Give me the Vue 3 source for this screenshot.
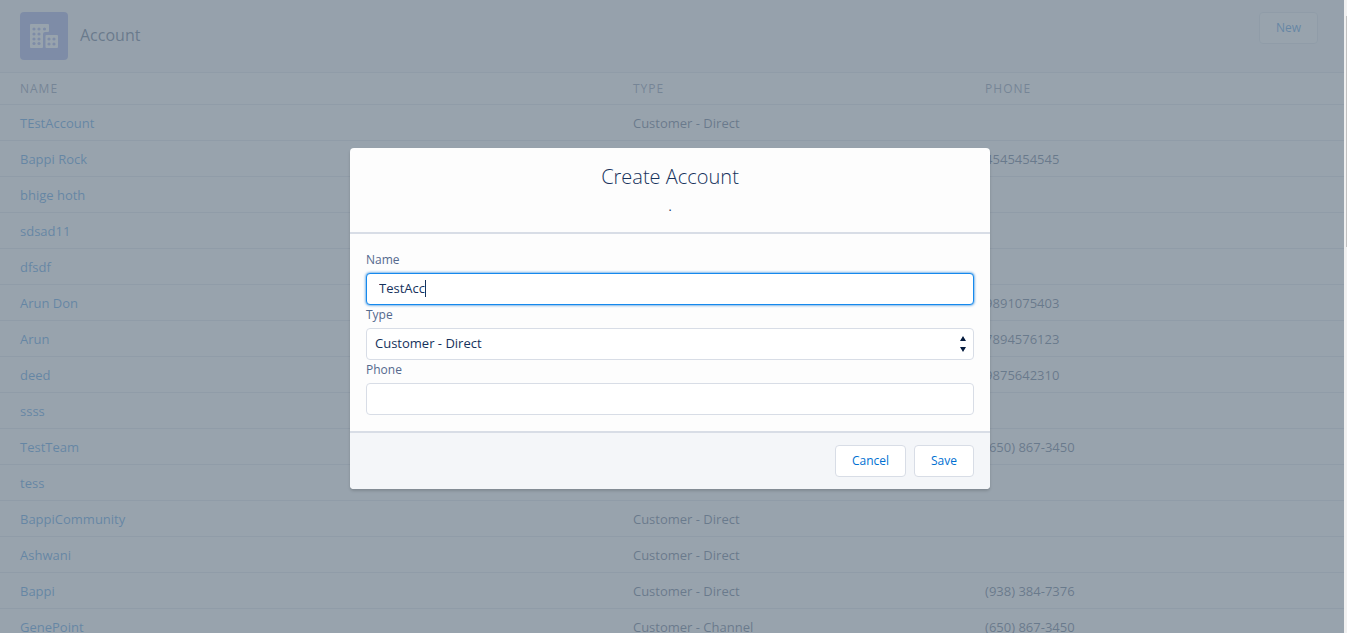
<template>
  <div class="page">
    <main class="content">
      <header class="page-header">
        <span class="account-icon">
          <svg viewBox="0 0 48 48" width="48" height="48" aria-hidden="true">
            <path
              fill="#fff"
              d="M11 12h17a1 1 0 0 1 1 1v6a1 1 0 0 1-1 1h-3a2 2 0 0 0-2 2v13a1 1 0 0 1-1 1H11a1 1 0 0 1-1-1V13a1 1 0 0 1 1-1z"
            />
            <rect x="25.5" y="23" width="12.500" height="13" rx="1" fill="#fff" />
            <circle v-for="w in windows" :key="w.x + '-' + w.y" :cx="w.x" :cy="w.y" r="1.600" fill="#7f8de1" />
          </svg>
        </span>
        <h1 class="page-title">Account</h1>
        <button type="button" class="btn" @click="showModal = true">New</button>
      </header>

      <table class="account-table">
        <thead>
          <tr>
            <th class="col-name" scope="col">Name</th>
            <th class="col-type" scope="col">Type</th>
            <th scope="col">Phone</th>
          </tr>
        </thead>
        <tbody>
          <tr v-for="account in accounts" :key="account.name">
            <td><a href="#">{{ account.name }}</a></td>
            <td>{{ account.type }}</td>
            <td>{{ account.phone }}</td>
          </tr>
        </tbody>
      </table>
    </main>

    <div class="scroll-track"><div class="scroll-thumb"></div></div>

    <div v-if="showModal" class="backdrop">
      <form class="modal" role="dialog" aria-labelledby="modal-title" @submit.prevent="save">
        <div class="modal-header">
          <h2 id="modal-title">Create Account</h2>
          <p>.</p>
        </div>

        <div class="modal-body">
          <label for="account-name">Name</label>
          <div class="field">
            <input id="account-name" v-model="form.name" class="control active" type="text" autocomplete="off" />
            <span class="caret"></span>
          </div>

          <label for="account-type">Type</label>
          <div class="field">
            <select id="account-type" v-model="form.type" class="control">
              <option v-for="type in types" :key="type">{{ type }}</option>
            </select>
            <svg class="select-arrows" viewBox="0 0 6 16" width="6" height="16" aria-hidden="true">
              <path d="M3 0l3 5H0zM3 16l3-5H0z" fill="#061c3f" />
            </svg>
          </div>

          <label for="account-phone">Phone</label>
          <div class="field">
            <input id="account-phone" v-model="form.phone" class="control" type="text" autocomplete="off" />
          </div>
        </div>

        <div class="modal-footer">
          <button type="button" class="btn" @click="showModal = false">Cancel</button>
          <button type="submit" class="btn">Save</button>
        </div>
      </form>
    </div>
  </div>
</template>

<script setup>
import { reactive, ref } from 'vue'

const types = ['Customer - Direct', 'Customer - Channel']

const accounts = ref([
  { name: 'TEstAccount', type: 'Customer - Direct', phone: '' },
  { name: 'Bappi Rock', type: '', phone: '4545454545' },
  { name: 'bhige hoth', type: '', phone: '' },
  { name: 'sdsad11', type: '', phone: '' },
  { name: 'dfsdf', type: '', phone: '' },
  { name: 'Arun Don', type: '', phone: '9891075403' },
  { name: 'Arun', type: '', phone: '7894576123' },
  { name: 'deed', type: '', phone: '9875642310' },
  { name: 'ssss', type: '', phone: '' },
  { name: 'TestTeam', type: '', phone: '(650) 867-3450' },
  { name: 'tess', type: '', phone: '' },
  { name: 'BappiCommunity', type: 'Customer - Direct', phone: '' },
  { name: 'Ashwani', type: 'Customer - Direct', phone: '' },
  { name: 'Bappi', type: 'Customer - Direct', phone: '(938) 384-7376' },
  { name: 'GenePoint', type: 'Customer - Channel', phone: '(650) 867-3450' }
])

const showModal = ref(true)
const form = reactive({ name: 'TestAcc', type: 'Customer - Direct', phone: '' })

// windows of the two buildings in the account icon
const windows = [
  ...[14, 19, 24.5].map((x) => ({ x, y: 17 })),
  ...[22, 27, 31.5].flatMap((y) => [14, 19].map((x) => ({ x, y }))),
  ...[27, 32].flatMap((y) => [29, 34].map((x) => ({ x, y })))
]

const save = () => {
  accounts.value.unshift({ ...form })
  showModal.value = false
}
</script>

<style>
body {
  margin: 0;
}
</style>

<style scoped>
.page {
  display: flex;
  height: 100vh;
  overflow: hidden;
  font-family: 'Open Sans', 'Noto Sans', sans-serif;
  font-size: 13px;
  color: #16325c;
}

.content {
  flex: 1;
  min-width: 0;
}

.page-header {
  display: flex;
  align-items: flex-start;
  padding: 12px 26px 12px 20px;
  background: #f4f6f9;
  border-bottom: 1px solid #d8dde6;
}

.account-icon {
  height: 48px;
  border-radius: 4px;
  background: #7f8de1;
}

.page-title {
  flex: 1;
  margin: 0 12px;
  font-size: 16px;
  line-height: 46px;
  font-weight: 400;
}

.btn {
  height: 32px;
  padding: 0 16px 2px;
  border: 1px solid #d8dde6;
  border-radius: 4px;
  background: #fff;
  color: #0070d2;
  font-family: inherit;
  font-size: 12px;
  cursor: pointer;
}

.account-table {
  width: 100%;
  border-collapse: separate;
  border-spacing: 0;
  table-layout: fixed;
}

.account-table th,
.account-table td {
  box-sizing: border-box;
  height: 36px;
  padding: 0 8px;
  border-bottom: 1px solid #d8dde6;
  text-align: left;
  white-space: nowrap;
}

.account-table th {
  height: 32px;
  font-size: 12px;
  font-weight: 400;
  letter-spacing: 1px;
  text-transform: uppercase;
  color: #54698d;
}

.account-table th:first-child,
.account-table td:first-child {
  padding-left: 20px;
}

.col-name {
  width: 46.5%;
}

.col-type {
  width: 26.2%;
}

.account-table a {
  color: #0070d2;
  text-decoration: none;
}

.scroll-track {
  width: 3px;
  padding-top: 16px;
  box-sizing: border-box;
  background: #f1f1f1;
}

.scroll-thumb {
  width: 1px;
  height: 231px;
  margin-left: auto;
  background: #c1c1c1;
}

.backdrop {
  position: absolute;
  inset: 0 3px 0 0;
  display: flex;
  align-items: center;
  justify-content: center;
  padding: 4px 4px 0 0;
  background: rgba(126, 140, 153, 0.8);
}

.modal {
  width: 640px;
  max-width: 100%;
  border-radius: 4px;
  overflow: hidden;
  background: #fdfdfd;
  box-shadow: 0 2px 3px rgba(0, 0, 0, 0.16);
}

.modal-header {
  padding: 16px;
  border-bottom: 2px solid #d8dde6;
  text-align: center;
}

.modal-header h2 {
  margin: 0;
  font-size: 20px;
  line-height: 25px;
  font-weight: 300;
}

.modal-header p {
  margin: 8px 0 0;
  font-size: 12px;
  line-height: 19px;
}

.modal-body {
  padding: 16px;
}

.modal-body label {
  display: block;
  margin-bottom: 4px;
  font-size: 12px;
  line-height: 19px;
  color: #54698d;
}

.field {
  position: relative;
}

.control {
  display: block;
  box-sizing: border-box;
  width: 100%;
  height: 32px;
  padding: 0 12px 2px;
  border: 1px solid #d8dde6;
  border-radius: 4px;
  outline: 0;
  background: #fff;
  color: #16325c;
  font-family: inherit;
  font-size: 13px;
}

select.control {
  padding: 0 8px 2px;
  appearance: none;
}

.control.active,
.control:focus {
  border-color: #1589ee;
  box-shadow: 0 0 3px #0070d2;
}

.caret {
  position: absolute;
  top: 7px;
  left: 59px;
  width: 1px;
  height: 17px;
  background: #16325c;
}

.select-arrows {
  position: absolute;
  top: 8px;
  right: 8px;
  pointer-events: none;
}

.modal-footer {
  display: flex;
  justify-content: flex-end;
  gap: 8px;
  padding: 12px 16px;
  border-top: 2px solid #d8dde6;
  background: #f4f6f9;
}
</style>
